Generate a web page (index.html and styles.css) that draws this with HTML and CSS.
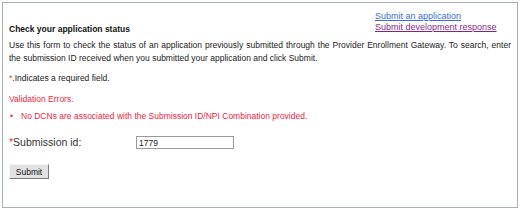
FILE: index.html
```html
<!DOCTYPE html>
<html lang="en">
<head>
  <meta charset="UTF-8">
  <title>Check your application status</title>
  <link rel="stylesheet" href="styles.css">
</head>
<body>
    <div class="panel">
        <div class="top">
            <h1>Check your application status</h1>
            <div class="links">
                <a href="#" class="link-new">Submit an application</a>
                <a href="#" class="link-dev">Submit development response</a>
            </div>
        </div>
        <p class="intro">Use this form to check the status of an application previously submitted through the Provider Enrollment Gateway. To search, enter the submission ID received when you submitted your application and click Submit.</p>
        <p class="required"><span class="star">*</span>.Indicates a required field.</p>
        <div class="errors">
            <p>Validation Errors.</p>
            <ul>
                <li>No DCNs are associated with the Submission ID/NPI Combination provided.</li>
            </ul>
        </div>
        <form class="search">
            <div class="field">
                <label for="sub-id"><span class="star">*</span>Submission id:</label>
                <input type="text" id="sub-id" value="1779">
            </div>
            <button type="submit">Submit</button>
        </form>
    </div>
</body>
</html>
```

FILE: styles.css
```css
body {
  font-family: 'Liberation Sans', Arial, sans-serif;
  font-size: 8.5px;
  color: #222;
  background: #fff;
  margin: 2px;
}
.panel {
  border: 1px solid #a7b1bb;
  height: 206px;
  padding: 0 6px;
  box-sizing: border-box;
}
.top {
  display: flex;
  justify-content: space-between;
  align-items: flex-end;
  padding-top: 8px;
  line-height: 11px;
}
h1 {
  font-size: 8.5px;
  margin: 0 0 -2px;
  color: #111;
}
.links {
  display: flex;
  flex-direction: column;
  width: 136px;
  font-size: 9px;
}
.link-new {
  color: #3a6fcf;
}
.link-dev {
  color: #8a1f8a;
}
.intro {
  margin: 6px 0 0;
  line-height: 13px;
  text-align: justify;
}
.required {
  margin: 7px 0 0;
  line-height: 13px;
}
.star {
  color: #e8323c;
}
.errors {
  color: #f0243a;
  margin-top: 8px;
  line-height: 13px;
}
.errors p {
  margin: 0;
}
.errors ul {
  list-style: none;
  margin: 4px 0 0;
  padding: 0;
}
.errors li {
  display: flex;
}
.errors li::before {
  content: "\2022";
  width: 11px;
  padding-left: 1px;
}
.field {
  display: flex;
  align-items: center;
  margin-top: 12px;
  height: 15px;
}
.field label {
  font-size: 10.5px;
  line-height: 15px;
  width: 127px;
  color: #333;
}
.field input {
  width: 98px;
  height: 13px;
  box-sizing: border-box;
  border: 1px solid #999;
  font-family: inherit;
  font-size: 8.5px;
  padding: 0 2px;
  color: #222;
}
button {
  display: block;
  margin-top: 14px;
  font-family: inherit;
  font-size: 8.5px;
  padding: 0 4px;
  width: 40px;
  height: 15px;
  background: #e2e2e2;
  border: 1px solid #aaa;
  border-color: #f4f4f4 #7c7c7c #7c7c7c #f4f4f4;
  color: #111;
}
```
